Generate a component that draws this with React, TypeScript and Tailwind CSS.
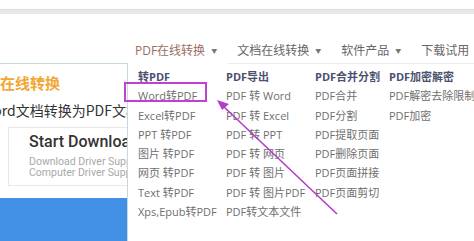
const navItems = [
  { label: 'PDF在线转换', caret: true, active: true },
  { label: '文档在线转换', caret: true, active: false },
  { label: '软件产品', caret: true, active: false },
  { label: '下载试用', caret: false, active: false },
]

const columns = [
  {
    title: '转PDF',
    width: 'w-[88px]',
    items: ['Word转PDF', 'Excel转PDF', 'PPT 转PDF', '图片 转PDF', '网页 转PDF', 'Text 转PDF', 'Xps,Epub转PDF'],
  },
  {
    title: 'PDF导出',
    width: 'w-[89px]',
    items: ['PDF 转 Word', 'PDF 转 Excel', 'PDF 转 PPT', 'PDF 转 网页', 'PDF 转 图片', 'PDF 转 图片PDF', 'PDF转文本文件'],
  },
  {
    title: 'PDF合并分割',
    width: 'w-[74px]',
    items: ['PDF合并', 'PDF分割', 'PDF提取页面', 'PDF删除页面', 'PDF页面拼接', 'PDF页面剪切'],
  },
  {
    title: 'PDF加密解密',
    width: 'w-[90px]',
    items: ['PDF解密去除限制', 'PDF加密'],
  },
]

export default function App() {
  return (
    <div className="relative w-[474px] h-[241px] overflow-hidden bg-white font-['Open_Sans','Noto_Sans_CJK_SC',sans-serif]">
      {/* Top strip */}
      <div className="h-[9px]" />
      <div className="h-[5px] bg-[#e9e9e9] border-t border-[#dcdcdc]" />

      {/* Nav */}
      <nav className="h-[49px] pt-[25px] pl-[135px] flex items-center gap-[20px] text-[12px] leading-[16px] whitespace-nowrap">
        {navItems.map(({ label, caret, active }) => (
          <span
            key={label}
            className={`flex items-center gap-[6px] ${active ? 'text-[#9b6e62]' : 'text-[#666666]'}`}
          >
            {label}
            {caret && <span className="text-[6px] text-[#777777]">▼</span>}
          </span>
        ))}
      </nav>

      {/* Body */}
      <div className="flex h-[178px]">
        {/* Page content behind the menu */}
        <div className="w-[128px] shrink-0 border-t border-r border-[#c9d7df] overflow-hidden flex flex-col whitespace-nowrap">
          <p className="mt-[9px] text-[15px] leading-[20px] font-bold text-[#f2a634] font-['Noto_Sans_CJK_SC',sans-serif]">在线转换</p>
          <p className="mt-[7px] -ml-[19px] text-[14px] leading-[20px] text-[#333333] font-['Noto_Sans_CJK_SC',sans-serif]">
            Word文档转换为PDF文档
          </p>
          <div className="mt-[7px] ml-[8px] h-[59px] w-[160px] shrink-0 border border-[#e8e8e8] pt-[4px] pl-[20px] font-['Roboto',sans-serif]">
            <p className="text-[16px] leading-[20px] font-medium text-[#333333]">Start Download</p>
            <p className="mt-[4px] text-[10.5px] leading-[11px] text-[#a8a8a8]">Download Driver Support</p>
            <p className="text-[10.5px] leading-[11px] text-[#a8a8a8]">Computer Driver Support</p>
          </div>
          <div className="mt-[12px] flex-1 bg-[#4190e6]" />
        </div>

        {/* Dropdown menu */}
        <div className="flex-1 flex flex-col">
          <div className="ml-[100px] border-t border-[#ececf0]" />
          <div className="flex pl-[10px] pt-[3px] text-[11px] leading-[19.3px] whitespace-nowrap">
            {columns.map((col) => (
              <div key={col.title} className={`${col.width} shrink-0`}>
                <p className="font-bold text-[#4d5170]">{col.title}</p>
                {col.items.map((item) => (
                  <p key={item} className="text-[#6f6f6f]">
                    {item}
                  </p>
                ))}
              </div>
            ))}
          </div>
        </div>
      </div>

      {/* Annotation: highlight box + arrow */}
      <div className="absolute left-[124px] top-[82px] w-[83px] h-[20px] border-2 border-[#c23fd4]" />
      <svg className="absolute inset-0 pointer-events-none" width="474" height="241" viewBox="0 0 474 241">
        <line x1="337" y1="214" x2="223" y2="106" stroke="#b43cc9" strokeWidth="1.6" />
        <polygon points="217,100 229,104 222,110" fill="#b43cc9" />
      </svg>
    </div>
  )
}
